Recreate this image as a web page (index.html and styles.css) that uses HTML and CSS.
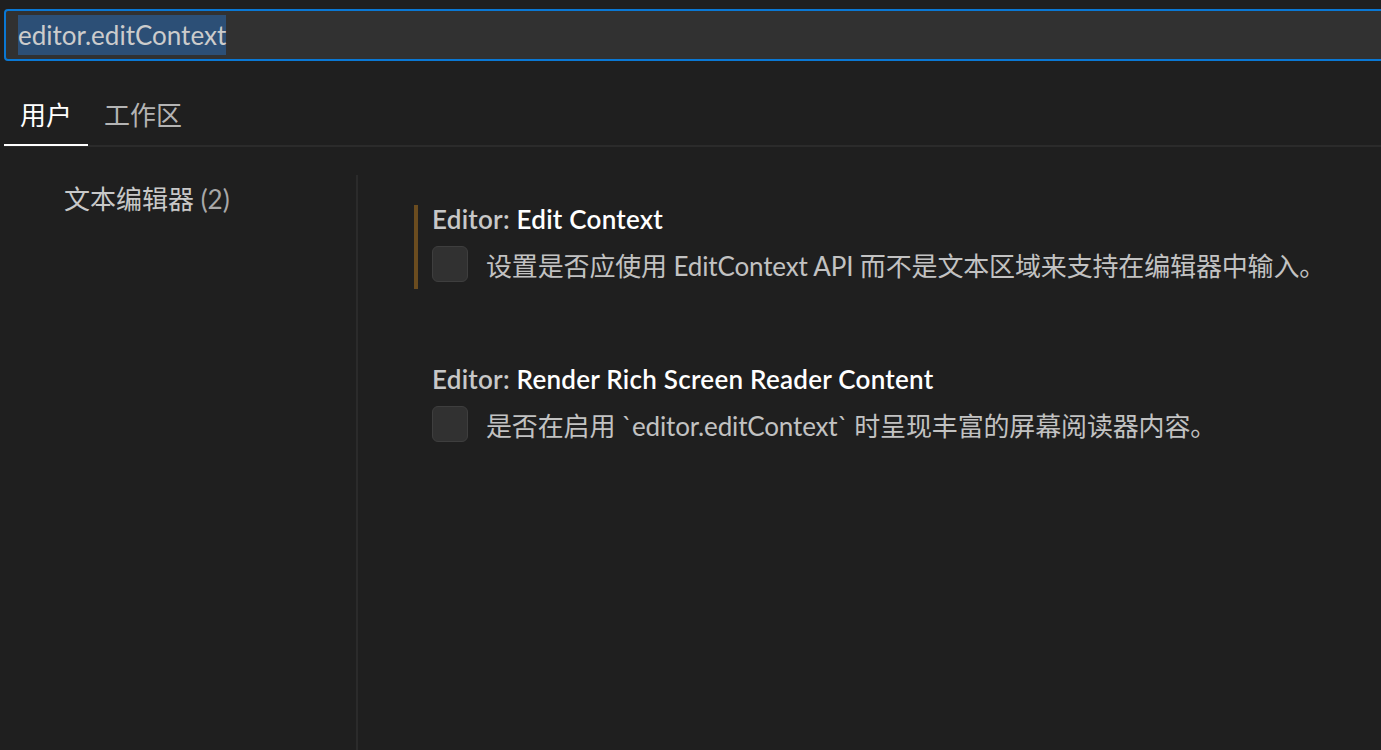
FILE: index.html
```html
<!DOCTYPE html>
<html lang="zh-CN">
<head>
<meta charset="utf-8">
<title>Settings</title>
<link rel="stylesheet" href="styles.css">
</head>
<body>
<div class="search">
  <span class="query">editor.editContext</span>
</div>
<div class="tabs">
  <div class="tab active">用户</div>
  <div class="tab">工作区</div>
</div>
<div class="main">
  <nav class="toc">
    <div class="toc-item">文本编辑器 <span class="count">(2)</span></div>
  </nav>
  <section class="settings">
    <div class="setting focused">
      <div class="title"><span class="cat">Editor: </span><span class="name">Edit Context</span></div>
      <div class="row">
        <span class="checkbox"></span>
        <span class="desc">设置是否应使用 EditContext API 而不是文本区域来支持在编辑器中输入。</span>
      </div>
    </div>
    <div class="setting">
      <div class="title"><span class="cat">Editor: </span><span class="name">Render Rich Screen Reader Content</span></div>
      <div class="row">
        <span class="checkbox"></span>
        <span class="desc">是否在启用 `editor.editContext` 时呈现丰富的屏幕阅读器内容。</span>
      </div>
    </div>
  </section>
</div>
</body>
</html>
```

FILE: styles.css
```css
html, body {
  margin: 0;
  padding: 0;
  height: 100%;
}
body {
  background: #1f1f1f;
  color: #cccccc;
  font-family: Lato, "Noto Sans CJK SC", sans-serif;
  font-size: 26px;
  overflow: hidden;
  display: flex;
  flex-direction: column;
}
.search {
  margin: 9px -20px 0 4px;
  border: 2px solid #0a78d4;
  border-radius: 4px;
  background: #313131;
  padding: 4px 0 0 12px;
  height: 44px;
}
.query {
  display: inline-block;
  height: 40px;
  line-height: 40px;
  background: #2c4f76;
  color: #cccccc;
  vertical-align: top;
}
.tabs {
  display: flex;
  margin: 38px 0 0 4px;
  border-bottom: 2px solid #2b2b2b;
}
.tab {
  line-height: 32px;
  padding: 0 16px 13px;
  color: #b4b4b4;
  border-bottom: 2px solid transparent;
  margin-bottom: -1px;
}
.tab.active {
  color: #ffffff;
  border-bottom-color: #ffffff;
}
.main {
  flex: 1;
  display: flex;
  margin-top: 28px;
}
.toc {
  width: 356px;
  flex: none;
  border-right: 2px solid #2b2b2b;
  padding-top: 8px;
}
.toc-item {
  line-height: 32px;
  padding-left: 64px;
  color: #c8c8c8;
}
.count {
  color: #a8a8a8;
}
.settings {
  flex: 1;
  padding: 30px 0 0 56px;
}
.setting {
  border-left: 4px solid transparent;
  padding: 0 0 3px 14px;
}
.setting + .setting {
  margin-top: 76px;
}
.setting.focused {
  border-left-color: #6b4c1f;
}
.title {
  line-height: 28px;
  font-weight: 600;
  letter-spacing: 0.25px;
}
.cat {
  color: #c8c8c8;
}
.name {
  color: #ffffff;
}
.row {
  display: flex;
  align-items: flex-start;
  margin-top: 13px;
  gap: 18px;
}
.checkbox {
  width: 34px;
  height: 34px;
  flex: none;
  background: #313131;
  border: 1px solid #3e3e3e;
  border-radius: 6px;
}
.desc {
  line-height: 40px;
  color: #c2c2c2;
  letter-spacing: -0.15px;
}
```
